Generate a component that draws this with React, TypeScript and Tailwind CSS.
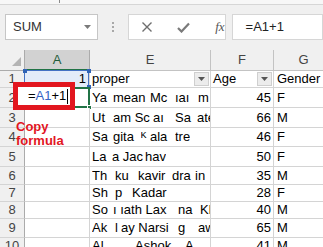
type Frag = [number, string];

const rows: { n: number; h: string; e: Frag[]; f: string; g: string }[] = [
  { n: 2, h: "h-[20px]", e: [[92, "Ya"], [113, "mean"], [150, "Mc"], [175, "ıaı"], [198, "m"]], f: "45", g: "F" },
  { n: 3, h: "h-[20px]", e: [[92, "Ut"], [113, "am Sc"], [153, "aı"], [175, "Sa"], [197, "ate"]], f: "66", g: "M" },
  { n: 4, h: "h-[19px]", e: [[92, "Sa"], [113, "gita"], [141, "ᴷ"], [150, "ala"], [175, "tre"]], f: "46", g: "F" },
  { n: 5, h: "h-[20px]", e: [[92, "La"], [112, "a Jac"], [145, "hav"]], f: "50", g: "F" },
  { n: 6, h: "h-[18px]", e: [[92, "Th"], [115, "ku"], [138, "kavir"], [172, "dra"], [195, "in"]], f: "35", g: "M" },
  { n: 7, h: "h-[17px]", e: [[92, "Sh"], [115, "p"], [132, "Kadar"]], f: "28", g: "F" },
  { n: 8, h: "h-[17px]", e: [[92, "So"], [113, "ı ıath Lax"], [178, "na"], [200, "Kl"]], f: "40", g: "M" },
  { n: 9, h: "h-[19px]", e: [[92, "Ak"], [115, "l"], [121, "ay Narsi"], [178, "g"], [198, "aw"]], f: "65", g: "M" },
  { n: 10, h: "h-[17px]", e: [[92, "Al"], [135, "Ashok"], [185, "A"]], f: "41", g: "M" },
];

function Fragments({ items }: { items: Frag[] }) {
  return (
    <div className="flex h-full items-center overflow-hidden whitespace-nowrap pl-[2px]">
      {items.map(([x, t], i) => {
        const next = items[i + 1];
        return (
          <span key={i} className="shrink-0 overflow-hidden" style={next ? { width: next[0] - x } : undefined}>
            {t}
          </span>
        );
      })}
    </div>
  );
}

function FilterButton() {
  return (
    <div className="mr-[1px] flex h-[14px] w-[15px] shrink-0 items-center justify-center border border-[#cfcfcf] bg-[#ececec]">
      <svg width="7" height="4" viewBox="0 0 7 4">
        <polygon points="0,0 7,0 3.5,4" fill="#555" />
      </svg>
    </div>
  );
}

export default function App() {
  return (
    <div className="relative h-[247px] w-[323px] overflow-hidden bg-[#f0f0f0] font-['Liberation_Sans',Arial,sans-serif] text-[13px] text-black">
      {/* ribbon edge */}
      <div className="h-[5px] border-b border-[#d6d6d6] bg-[#f7f7f7] pl-[59px]">
        <div className="h-[3px] w-px bg-[#8a8a8a]" />
      </div>

      {/* formula bar */}
      <div className="flex h-[45px] items-start pt-[9px]">
        <div className="ml-[5px] flex h-[26px] w-[102px] items-center justify-between border border-[#c6c6c6] bg-white pl-[7px] pr-[6px] text-[#333]">
          <span>SUM</span>
          <svg width="7" height="4" viewBox="0 0 7 4">
            <polygon points="0,0 7,0 3.5,4" fill="#7a7a7a" />
          </svg>
        </div>
        <div className="ml-[14px] flex h-[26px] flex-col items-center justify-center gap-[2px]">
          <div className="h-[2px] w-[2px] bg-[#a8a8a8]" />
          <div className="h-[2px] w-[2px] bg-[#a8a8a8]" />
          <div className="h-[2px] w-[2px] bg-[#a8a8a8]" />
        </div>
        <div className="ml-[14px] flex h-[26px] w-[106px] items-center border border-[#d6d6d6] bg-white pl-[12px]">
          <svg width="12" height="12" viewBox="0 0 12 12">
            <path d="M1.5 1.5 L10.5 10.5 M10.5 1.5 L1.5 10.5" stroke="#6e6e6e" strokeWidth="1.4" />
          </svg>
          <svg className="ml-[24px]" width="13" height="11" viewBox="0 0 13 11">
            <path d="M1 6 L4.5 9.5 L12 1.5" stroke="#7a7a7a" strokeWidth="2.2" fill="none" />
          </svg>
          <span className="ml-[25px] font-['Liberation_Serif',serif] text-[13px] italic text-[#555]">fx</span>
        </div>
        <div className="ml-[6px] flex h-[26px] w-[100px] items-center border border-[#d6d6d6] bg-white pl-[13px] text-[#222]">
          =A1+1
        </div>
      </div>

      {/* column headers */}
      <div className="flex h-[21px] w-max text-[#444]">
        <div className="flex w-[25px] items-end justify-end border-r border-b border-[#ababab] pr-[3px] pb-[4px]">
          <svg width="9" height="9" viewBox="0 0 9 9">
            <polygon points="9,0 9,9 0,9" fill="#b4b4b4" />
          </svg>
        </div>
        <div className="flex w-[65px] items-center justify-center border-r border-b-2 border-r-[#ababab] border-b-[#217346] bg-[#d2d2d2] text-[#1e5c3a]">
          A
        </div>
        <div className="flex w-[121px] items-center justify-center border-r border-b border-[#c3c3c3]">E</div>
        <div className="flex w-[63px] items-center justify-center border-r border-b border-[#c3c3c3]">F</div>
        <div className="flex w-[60px] items-center justify-center border-r border-b border-[#c3c3c3]">G</div>
      </div>

      {/* row 1 */}
      <div className="flex h-[17px] w-max">
        <div className="flex w-[25px] items-center justify-center border-r border-b border-r-[#ababab] border-b-[#d4d4d4] text-[#444]">1</div>
        <div className="relative flex w-[65px] items-center justify-end border-r border-b border-[#d4d4d4] bg-[#e3ecf9] pr-[3px]">
          1
          <div className="absolute -inset-y-px -left-px right-0 border border-[#4472c4]" />
          <div className="absolute -left-[2px] -top-[2px] h-[4px] w-[4px] bg-[#2f63b5]" />
          <div className="absolute -right-[2px] -top-[2px] h-[4px] w-[4px] bg-[#2f63b5]" />
          <div className="absolute -bottom-[2px] -right-[2px] h-[4px] w-[4px] bg-[#2f63b5]" />
        </div>
        <div className="flex w-[121px] items-center justify-between border-r border-b border-[#d4d4d4] bg-white pl-[2px]">
          <span>proper</span>
          <FilterButton />
        </div>
        <div className="flex w-[63px] items-center justify-between border-r border-b border-[#d4d4d4] bg-white pl-[2px]">
          <span>Age</span>
          <FilterButton />
        </div>
        <div className="flex w-[60px] items-center overflow-hidden whitespace-nowrap border-r border-b border-[#d4d4d4] bg-white pl-[3px]">
          Gender
        </div>
      </div>

      {rows.map((r) => (
        <div key={r.n} className={`flex w-max ${r.h}`}>
          <div className="flex w-[25px] items-center justify-center border-r border-b border-r-[#ababab] border-b-[#d4d4d4] text-[#444]">
            {r.n}
          </div>
          <div className="relative w-[65px] border-r border-b border-[#d4d4d4] bg-white">
            {r.n === 2 && (
              <>
                <div className="absolute -inset-y-px -left-px -right-px border-2 border-[#217346]" />
                <div className="absolute -bottom-[3px] -right-[3px] h-[5px] w-[5px] border border-white bg-[#217346]" />
              </>
            )}
          </div>
          <div className="w-[121px] border-r border-b border-[#d4d4d4] bg-white">
            <Fragments items={r.e} />
          </div>
          <div className="flex w-[63px] items-center justify-end border-r border-b border-[#d4d4d4] bg-white pr-[2px]">
            {r.f}
          </div>
          <div className="flex w-[60px] items-center border-r border-b border-[#d4d4d4] bg-white pl-[3px]">{r.g}</div>
        </div>
      ))}

      {/* annotation */}
      <div className="absolute left-[13px] top-[82px] flex h-[28px] w-[62px] items-center border-[5px] border-[#e2161f] bg-white pl-[10px]">
        <span>=</span>
        <span className="text-[#3463c4]">A1</span>
        <span>+1</span>
        <div className="ml-[1px] h-[15px] w-px bg-black" />
      </div>
      <div className="absolute left-[16px] top-[120px] text-[13px] leading-[14px] font-bold text-[#e2161f]">
        <div>Copy</div>
        <div>formula</div>
      </div>
    </div>
  );
}
